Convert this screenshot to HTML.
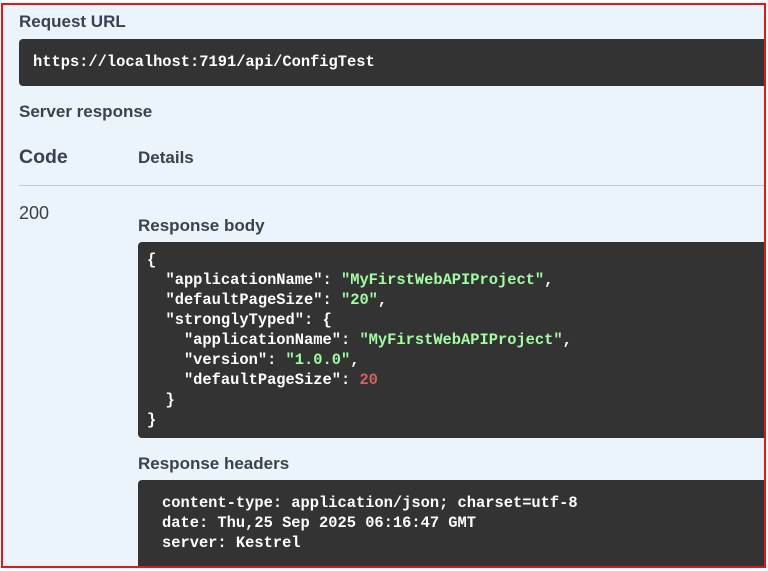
<!DOCTYPE html>
<html><head><style>
html,body{margin:0;padding:0;width:768px;height:571px;overflow:hidden;background:#fff}
.frame{position:absolute;left:1px;top:3px;width:761px;height:561px;border:2px solid #e8141c;background:#ebf3fb;overflow:hidden}
.t{position:absolute;font-family:"Liberation Sans",Arial,sans-serif;color:#3b4151;font-weight:bold;white-space:nowrap}
.box{position:absolute;background:#333;border-radius:4px;color:#fff;font-family:"Liberation Mono",monospace;font-weight:bold;font-size:15.4px;white-space:pre}
.s{color:#a2fca2}.n{color:#d36363}
</style></head><body>
<div class="frame">
<div class="t" style="left:16px;top:7px;font-size:17px">Request URL</div>
<div class="box" style="left:16px;top:34px;width:760px;height:47px;line-height:47px;padding-left:14px">https://localhost:7191/api/ConfigTest</div>
<div class="t" style="left:16px;top:97px;font-size:17px">Server response</div>
<div class="t" style="left:16px;top:141px;font-size:19.5px">Code</div>
<div class="t" style="left:135px;top:143px;font-size:17px">Details</div>
<div style="position:absolute;left:16px;top:180px;width:760px;height:1px;background:#c5c9cf"></div>
<div class="t" style="left:16px;top:198px;font-size:18px;font-weight:normal">200</div>
<div class="t" style="left:135px;top:211px;font-size:17px">Response body</div>
<div class="box" style="left:135px;top:237px;width:640px;height:196px;padding:8px 0 0 9px;box-sizing:border-box;line-height:20px">{
  "applicationName": <span class="s">"MyFirstWebAPIProject"</span>,
  "defaultPageSize": <span class="s">"20"</span>,
  "stronglyTyped": {
    "applicationName": <span class="s">"MyFirstWebAPIProject"</span>,
    "version": <span class="s">"1.0.0"</span>,
    "defaultPageSize": <span class="n">20</span>
  }
}</div>
<div class="t" style="left:135px;top:449px;font-size:17px">Response headers</div>
<div class="box" style="left:135px;top:475px;width:640px;height:90px;padding:13px 0 0 24px;box-sizing:border-box;line-height:20px">content-type: application/json; charset=utf-8
date: Thu,25 Sep 2025 06:16:47 GMT
server: Kestrel</div>
</div>
</body></html>
